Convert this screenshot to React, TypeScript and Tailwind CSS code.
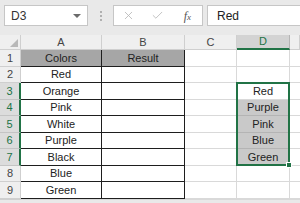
import { X, Check } from 'lucide-react';

const cols = ['A', 'B', 'C', 'D', ''];
const colorsList = ['Red', 'Orange', 'Pink', 'White', 'Purple', 'Black', 'Blue', 'Green'];
const dList: { [row: number]: string } = { 3: 'Red', 4: 'Purple', 5: 'Pink', 6: 'Blue', 7: 'Green' };

export default function App() {
  const rows = [1, 2, 3, 4, 5, 6, 7, 8, 9, 10];

  return (
    <div
      className="w-[300px] h-[203px] overflow-hidden bg-[#e9e9e9] text-[11px] text-[#222]"
      style={{ fontFamily: '"Liberation Sans", Arial, sans-serif' }}
    >
      {/* Formula bar */}
      <div className="flex items-center h-[35px] pb-[9px] pt-[5px] pl-[4px]">
        <div className="flex items-center justify-between w-[84px] h-[21px] bg-white border border-[#c6c6c6] pl-[6px] pr-[6px]">
          <span className="text-[12px] text-[#333]">D3</span>
          <span className="w-0 h-0 border-l-[4px] border-r-[4px] border-t-[4px] border-l-transparent border-r-transparent border-t-[#6b6b6b]" />
        </div>
        <div className="w-[25px] flex justify-center">
          <div className="flex flex-col gap-[2px]">
            <span className="w-[2px] h-[2px] bg-[#b0b0b0]" />
            <span className="w-[2px] h-[2px] bg-[#b0b0b0]" />
            <span className="w-[2px] h-[2px] bg-[#b0b0b0]" />
          </div>
        </div>
        <div className="flex items-center w-[90px] h-[21px] bg-white border border-[#c6c6c6]">
          <div className="w-[30px] flex justify-center">
            <X size={13} strokeWidth={1.5} className="text-[#b5b5b5]" />
          </div>
          <div className="w-[30px] flex justify-center">
            <Check size={13} strokeWidth={1.5} className="text-[#b5b5b5]" />
          </div>
          <div className="w-[30px] flex justify-center">
            <span
              className="italic text-[12px] text-[#555]"
              style={{ fontFamily: '"Liberation Serif", "Times New Roman", serif' }}
            >
              f<span className="text-[9px]">x</span>
            </span>
          </div>
        </div>
        <div className="flex items-center flex-1 ml-[4px] h-[21px] bg-white border border-[#c6c6c6] border-r-0 pl-[9px]">
          <span className="text-[12px] text-[#222]">Red</span>
        </div>
      </div>

      {/* Sheet */}
      <div className="relative grid grid-cols-[21px_81px_83px_52px_53px_1fr] grid-rows-[15px_17px_16px_17px_16px_17px_16px_17px_16px_17px_1fr] bg-white">
        {/* header row */}
        <div className="flex items-end justify-end p-[2px] bg-[#efefef] border-r border-b border-[#cfcfcf]">
          <svg width="8" height="8" viewBox="0 0 8 8">
            <polygon points="8,0 8,8 0,8" fill="#b8b8b8" />
          </svg>
        </div>
        {cols.map((c) => (
          <div
            key={c || 'E'}
            className={
              c === 'D'
                ? 'flex items-center justify-center bg-[#d3d3d3] border-r border-[#b5b5b5] border-b-2 border-b-[#217346] text-[#217346]'
                : 'flex items-center justify-center bg-[#efefef] border-r border-b border-[#cfcfcf] text-[#444]'
            }
          >
            {c}
          </div>
        ))}

        {rows.map((r) => {
          const sel = r >= 3 && r <= 7;
          return [
            <div
              key={`h${r}`}
              className={
                sel
                  ? 'flex items-center justify-center bg-[#dcdcdc] border-b border-[#c4c4c4] border-r-2 border-r-[#217346] text-[#217346]'
                  : 'flex items-center justify-center bg-[#efefef] border-r border-b border-[#cfcfcf] text-[#444]'
              }
            >
              {r <= 9 ? r : ''}
            </div>,
            <div
              key={`a${r}`}
              className={
                r <= 9
                  ? `flex items-center justify-center border-r border-b border-[#1e1e1e] ${r === 1 ? 'bg-[#a6a6a6]' : ''}`
                  : 'border-r border-b border-[#d9d9d9]'
              }
            >
              {r === 1 ? 'Colors' : r <= 9 ? colorsList[r - 2] : ''}
            </div>,
            <div
              key={`b${r}`}
              className={
                r <= 9
                  ? `flex items-center justify-center border-r border-b border-[#1e1e1e] ${r === 1 ? 'bg-[#a6a6a6]' : ''}`
                  : 'border-r border-b border-[#d9d9d9]'
              }
            >
              {r === 1 ? 'Result' : ''}
            </div>,
            <div key={`c${r}`} className="border-r border-b border-[#d9d9d9]" />,
            <div
              key={`d${r}`}
              className={
                r >= 4 && r <= 7
                  ? 'flex items-center justify-center bg-[#c9c9c9] border-r border-b border-[#b4b4b4]'
                  : 'flex items-center justify-center border-r border-b border-[#d9d9d9]'
              }
            >
              {dList[r] || ''}
            </div>,
            <div key={`e${r}`} className="border-b border-[#d9d9d9]" />,
          ];
        })}

        {/* selection outline D3:D7 */}
        <div className="absolute left-[236px] top-[47px] w-[54px] h-[84px] border-2 border-[#217346] pointer-events-none">
          <span className="absolute -right-[4px] -bottom-[4px] w-[6px] h-[6px] bg-[#217346] border border-white" />
        </div>
      </div>
    </div>
  );
}
